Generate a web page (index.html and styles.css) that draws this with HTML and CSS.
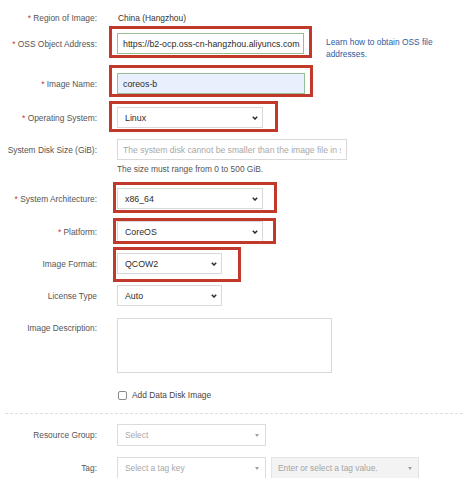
FILE: index.html
```html
<!DOCTYPE html>
<html>
<head>
<meta charset="utf-8">
<link rel="stylesheet" href="styles.css">
</head>
<body>
<div class="form">
  <div class="row r-region">
    <div class="label"><span class="req">*</span> Region of Image:</div>
    <div class="value">China (Hangzhou)</div>
  </div>

  <div class="row r-oss">
    <div class="label"><span class="req">*</span> OSS Object Address:</div>
    <div class="ctl">
      <div class="field valid w-oss">https://b2-ocp.oss-cn-hangzhou.aliyuncs.com</div>
      <span class="mark m-oss"></span>
    </div>
    <a class="help" href="#">Learn how to obtain OSS file addresses.</a>
  </div>

  <div class="row r-name">
    <div class="label"><span class="req">*</span> Image Name:</div>
    <div class="ctl">
      <div class="field valid autofill w-name">coreos-b</div>
      <span class="mark m-name"></span>
    </div>
  </div>

  <div class="row r-os">
    <div class="label"><span class="req">*</span> Operating System:</div>
    <div class="ctl">
      <div class="select w-mid">Linux<svg class="chev" viewBox="0 0 6 4"><path d="M0.8 0.8 L3 3 L5.2 0.8"/></svg></div>
      <span class="mark m-os"></span>
    </div>
  </div>

  <div class="row r-disk">
    <div class="label">System Disk Size (GiB):</div>
    <div class="field placeholder w-disk"><span class="ph">The system disk cannot be smaller than the image file in size.</span></div>
  </div>
  <div class="hint">The size must range from 0 to 500 GiB.</div>

  <div class="row r-arch">
    <div class="label"><span class="req">*</span> System Architecture:</div>
    <div class="ctl">
      <div class="select w-mid">x86_64<svg class="chev" viewBox="0 0 6 4"><path d="M0.8 0.8 L3 3 L5.2 0.8"/></svg></div>
      <span class="mark m-arch"></span>
    </div>
  </div>

  <div class="row r-plat">
    <div class="label"><span class="req">*</span> Platform:</div>
    <div class="ctl">
      <div class="select w-mid">CoreOS<svg class="chev" viewBox="0 0 6 4"><path d="M0.8 0.8 L3 3 L5.2 0.8"/></svg></div>
      <span class="mark m-plat"></span>
    </div>
  </div>

  <div class="row r-fmt">
    <div class="label">Image Format:</div>
    <div class="ctl">
      <div class="select w-small">QCOW2<svg class="chev" viewBox="0 0 6 4"><path d="M0.8 0.8 L3 3 L5.2 0.8"/></svg></div>
      <span class="mark m-fmt"></span>
    </div>
  </div>

  <div class="row r-lic">
    <div class="label">License Type</div>
    <div class="select w-small">Auto<svg class="chev" viewBox="0 0 6 4"><path d="M0.8 0.8 L3 3 L5.2 0.8"/></svg></div>
  </div>

  <div class="row r-desc">
    <div class="label">Image Description:</div>
    <div class="textarea"></div>
  </div>

  <div class="row r-check">
    <div class="label"></div>
    <span class="checkbox"></span>
    <span class="check-text">Add Data Disk Image</span>
  </div>

  <div class="divider"></div>

  <div class="row r-rg">
    <div class="label">Resource Group:</div>
    <div class="select soft w-rg">Select<span class="tri"></span></div>
  </div>

  <div class="row r-tag">
    <div class="label">Tag:</div>
    <div class="select soft w-rg">Select a tag key<span class="tri"></span></div>
    <div class="select soft disabled w-tagv">Enter or select a tag value.<span class="tri"></span></div>
  </div>
</div>
</body>
</html>
```

FILE: styles.css
```css
html, body {
  margin: 0;
  padding: 0;
  background: #ffffff;
}

body {
  font-family: "Liberation Sans", Arial, Helvetica, sans-serif;
  font-size: 8.4px;
  color: #333333;
}

.form {
  padding-top: 7px;
}

.row {
  display: flex;
  align-items: center;
  height: 21px;
}

.label {
  width: 97px;
  flex: none;
  margin-right: 20px;
  text-align: right;
  color: #555555;
  white-space: nowrap;
  line-height: 12px;
}

.req {
  color: #c9302c;
}

.value {
  padding-left: 1px;
  color: #333333;
}

.ctl {
  position: relative;
  display: flex;
}

.mark {
  position: absolute;
  border: 3px solid #c0392b;
  pointer-events: none;
}

.m-oss  { left: -8px; right: -8px;  top: -7px; bottom: -4px; }
.m-name { left: -8px; right: -8px;  top: -8px; bottom: -3px; }
.m-os   { left: -8px; right: -15px; top: -6px; bottom: -4px; }
.m-arch { left: -4px; right: -14px; top: -6px; bottom: -4px; }
.m-plat { left: -4px; right: -13px; top: -3px; bottom: -2px; }
.m-fmt  { left: -4px; right: -19px; top: -6px; bottom: -8px; }

.field,
.select {
  box-sizing: border-box;
  height: 21px;
  display: flex;
  align-items: center;
  border: 1px solid #d9d9d9;
  background: #ffffff;
  white-space: nowrap;
  overflow: hidden;
  font-size: 8.8px;
}

.field {
  padding: 0 5px;
  color: #2b2b2b;
}

.field.valid {
  border-color: #95bf95;
}

.field.autofill {
  background: #e8f0fe;
}

.field.placeholder {
  color: #a8a8a8;
  font-size: 8.6px;
}

.ph {
  display: block;
  overflow: hidden;
  width: 100%;
}

.select {
  position: relative;
  padding: 0 7px;
  color: #2b2b2b;
}

.chev {
  position: absolute;
  right: 4px;
  top: 8px;
  width: 6px;
  height: 4px;
  fill: none;
  stroke: #2b2b2b;
  stroke-width: 1.5;
}

.select.soft {
  color: #a8a8a8;
  border-color: #dcdcdc;
  height: 22px;
  font-size: 8.4px;
}

.select.disabled {
  background: #f3f3f3;
  border-color: #e4e4e4;
  color: #a5a5a5;
}

.tri {
  position: absolute;
  right: 6px;
  top: 9px;
  width: 0;
  height: 0;
  border-left: 2.5px solid transparent;
  border-right: 2.5px solid transparent;
  border-top: 3px solid #a0a0a0;
}

.w-oss  { width: 187px; }
.w-name { width: 188px; }
.w-mid  { width: 146px; }
.w-disk { width: 230px; }
.w-small { width: 105px; }
.w-rg   { width: 149px; }
.w-tagv { width: 148px; margin-left: 5px; padding-left: 6px; }

.help {
  align-self: flex-start;
  margin-top: 3px;
  margin-left: 22px;
  width: 125px;
  line-height: 12px;
  color: #2a5d9f;
  text-decoration: none;
}

.r-oss   { margin-top: 5px; }
.r-name  { margin-top: 19px; }
.r-os    { margin-top: 13px; }
.r-disk  { margin-top: 11px; }

.hint {
  margin-top: 3px;
  margin-left: 117px;
  line-height: 12px;
  color: #555555;
}

.r-arch  { margin-top: 13px; }
.r-plat  { margin-top: 12px; }
.r-fmt   { margin-top: 11px; }
.r-lic   { margin-top: 11px; }

.r-desc {
  margin-top: 12px;
  height: 55px;
  align-items: flex-start;
}

.r-desc .label {
  padding-top: 4px;
}

.textarea {
  box-sizing: border-box;
  width: 215px;
  height: 55px;
  border: 1px solid #d9d9d9;
  background: #ffffff;
}

.r-check {
  margin-top: 16px;
  height: 12px;
}

.checkbox {
  box-sizing: border-box;
  width: 9px;
  height: 9px;
  margin-left: 1px;
  border: 1px solid #8a8a8a;
  border-radius: 2px;
  background: #ffffff;
}

.check-text {
  margin-left: 5px;
  color: #444444;
}

.divider {
  margin: 12px 11px 0 5px;
  border-top: 1px dashed #dddddd;
}

.r-rg {
  margin-top: 10px;
  height: 22px;
}

.r-tag {
  margin-top: 11px;
}
```
